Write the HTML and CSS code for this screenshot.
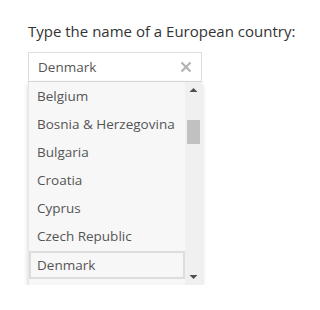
FILE: index.html
```html
<!DOCTYPE html>
<html>
<head>
<meta charset="utf-8">
<link rel="stylesheet" href="styles.css">
</head>
<body>
<div class="page">
  <label class="prompt" for="country">Type the name of a European country:</label>
  <div class="combo">
    <div class="input">
      <span class="value" id="country">Denmark</span>
      <svg class="clear" width="12" height="12" viewBox="0 0 12 12"><path d="M1.5 1.5 L10.5 10.5 M10.5 1.5 L1.5 10.5" stroke="#b3b3b3" stroke-width="2.2" fill="none"/></svg>
    </div>
    <div class="list">
      <ul class="items">
        <li class="item">Belgium</li>
        <li class="item">Bosnia &amp; Herzegovina</li>
        <li class="item">Bulgaria</li>
        <li class="item">Croatia</li>
        <li class="item">Cyprus</li>
        <li class="item">Czech Republic</li>
        <li class="item selected">Denmark</li>
      </ul>
      <div class="scrollbar">
        <svg class="arrow" width="17" height="17" viewBox="0 0 17 17"><path d="M4.5 10 L8.5 6 L12.5 10 Z" fill="#505050"/></svg>
        <div class="track"><div class="thumb"></div></div>
        <svg class="arrow" width="17" height="17" viewBox="0 0 17 17"><path d="M4.5 7 L8.5 11 L12.5 7 Z" fill="#505050"/></svg>
      </div>
    </div>
  </div>
</div>
</body>
</html>
```
FILE: styles.css
```css
html, body {
  margin: 0;
  padding: 0;
  background: #ffffff;
}
.page {
  display: flex;
  flex-direction: column;
  align-items: flex-start;
  padding: 20px 0 0 28px;
  font-family: "Open Sans", "Noto Sans", sans-serif;
}
.prompt {
  font-size: 15px;
  line-height: 22px;
  color: #333333;
  margin-bottom: 10px;
}
.combo {
  width: 174px;
  display: flex;
  flex-direction: column;
}
.input {
  box-sizing: border-box;
  height: 30px;
  border: 1px solid #dddddd;
  display: flex;
  align-items: center;
  justify-content: space-between;
  padding: 0 9px 0 9px;
  background: #fff;
}
.value {
  font-size: 13.5px;
  color: #555555;
}
.clear {
  display: block;
}
.list {
  box-sizing: border-box;
  height: 203px;
  display: flex;
  background: #f7f7f7;
  box-shadow: 0 2px 5px rgba(0,0,0,0.18);
  border-left: 1px solid #e6e6e6;
  overflow: hidden;
}
.items {
  list-style: none;
  margin: 0;
  padding: 0;
  flex: 1;
}
.item {
  box-sizing: border-box;
  height: 28px;
  line-height: 28px;
  padding-left: 8px;
  font-size: 13.5px;
  color: #555555;
  white-space: nowrap;
}
.item.selected {
  border: 2px solid #dddddd;
  line-height: 24px;
  padding-left: 6px;
  margin-top: 1px;
}
.scrollbar {
  width: 17px;
  background: #f0f0f0;
  display: flex;
  flex-direction: column;
}
.arrow {
  display: block;
}
.track {
  flex: 1;
  padding: 21px 2px 0 2px;
}
.thumb {
  height: 24px;
  background: #c1c1c1;
}
```
